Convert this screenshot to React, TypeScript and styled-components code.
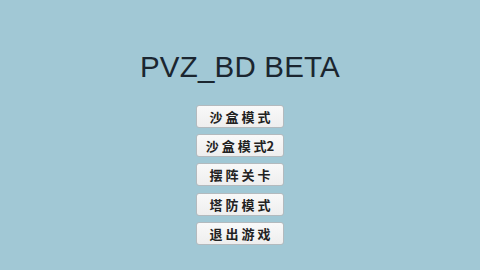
import React from "react";
import styled, { createGlobalStyle } from "styled-components";

const GlobalStyle = createGlobalStyle`
  html, body {
    margin: 0;
    padding: 0;
    background: #a1c8d5;
  }
`;

const items = ["沙 盒 模 式", "沙 盒 模 式2", "摆 阵 关 卡", "塔 防 模 式", "退 出 游 戏"];

function App() {
  return (
    <Styled.Page>
      <GlobalStyle />
      <Styled.Title>PVZ_BD BETA</Styled.Title>
      <Styled.Menu>
        {items.map((label) => (
          <Styled.MenuButton key={label}>{label}</Styled.MenuButton>
        ))}
      </Styled.Menu>
    </Styled.Page>
  );
}

const Styled = {
  Page: styled.div`
    width: 480px;
    height: 270px;
    box-sizing: border-box;
    padding-top: 52px;
    display: flex;
    flex-direction: column;
    align-items: center;
    background: #a1c8d5;
    overflow: hidden;
  `,
  Title: styled.h1`
    margin: 0 0 22.7px;
    font-family: "Liberation Sans", Arial, sans-serif;
    font-weight: normal;
    font-size: 29.5px;
    line-height: 30px;
    color: #1b2630;
    letter-spacing: 0.2px;
  `,
  Menu: styled.div`
    display: flex;
    flex-direction: column;
    align-items: center;
    gap: 6.35px;
  `,
  MenuButton: styled.button`
    width: 88px;
    height: 23px;
    box-sizing: border-box;
    padding: 0;
    border: 1px solid #b3babe;
    border-radius: 3px;
    background: linear-gradient(#f9f9f9, #eeeeee);
    font-family: "Noto Sans CJK SC", "Liberation Sans", sans-serif;
    font-weight: bold;
    font-size: 13px;
    white-space: pre;
    color: #222222;
    cursor: pointer;
    display: flex;
    align-items: center;
    justify-content: center;
  `,
};

export default App;
